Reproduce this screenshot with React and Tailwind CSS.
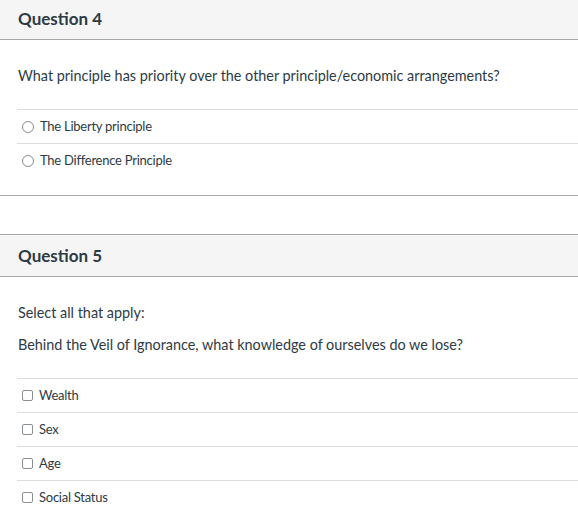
import React from "react";

const Radio = () => (
  <span className="inline-block w-[12px] h-[12px] rounded-full border border-[#8a8f93] bg-white shrink-0" />
);

const Checkbox = () => (
  <span className="inline-block w-[11px] h-[11px] rounded-[2px] border border-[#8a8f93] bg-white shrink-0" />
);

const Answer = ({ label, type }) => (
  <div className="h-[34px] border-t border-[#dcdcdc] flex items-center gap-[6px] pl-[5px]">
    {type === "radio" ? <Radio /> : <Checkbox />}
    <span className="text-[13px] tracking-[-0.25px] text-[#2d3b45]">{label}</span>
  </div>
);

const Question = ({ number, prompts, answers, type }) => (
  <div className="border-y border-[#a8a8a8] bg-white">
    <div className="h-[41px] bg-[#f5f5f5] border-b border-[#a8a8a8] box-content flex items-center px-[18px]">
      <h2 className="text-[17px] font-bold text-[#2d3b45]">Question {number}</h2>
    </div>
    <div className="pl-[17px] pb-[18px]">
      <div className="pt-[26px] pb-[23px] pl-px flex flex-col gap-[12px]">
        {prompts.map((p) => (
          <p key={p} className="text-[14.4px] leading-[20px] text-[#2d3b45]">
            {p}
          </p>
        ))}
      </div>
      {answers.map((a) => (
        <Answer key={a} label={a} type={type} />
      ))}
    </div>
  </div>
);

export default function App() {
  return (
    <div className="w-full min-h-screen bg-white font-['Lato',sans-serif] -mt-[3px]">
      <Question
        number={4}
        type="radio"
        prompts={[
          "What principle has priority over the other principle/economic arrangements?",
        ]}
        answers={["The Liberty principle", "The Difference Principle"]}
      />
      <div className="h-[38px]" />
      <Question
        number={5}
        type="checkbox"
        prompts={[
          "Select all that apply:",
          "Behind the Veil of Ignorance, what knowledge of ourselves do we lose?",
        ]}
        answers={["Wealth", "Sex", "Age", "Social Status"]}
      />
    </div>
  );
}
